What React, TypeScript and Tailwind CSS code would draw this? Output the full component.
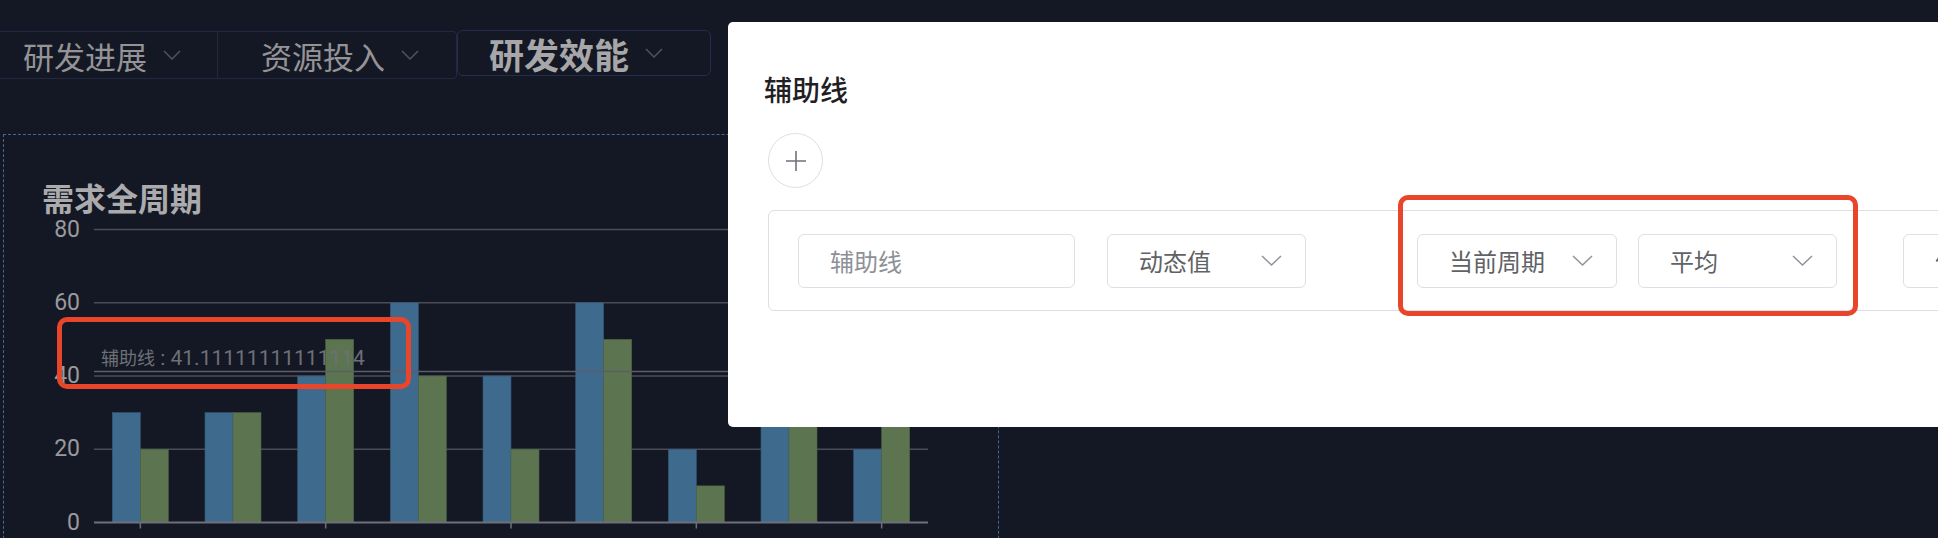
import React from 'react';

const cjk = "font-['Noto_Sans_CJK_SC','Noto_Sans',sans-serif]";

// chart values per category: [blue, green]
const series: [number, number][] = [
    [30, 20],
    [30, 30],
    [40, 50],
    [60, 40],
    [40, 20],
    [60, 50],
    [20, 10],
    [40, 40],
    [20, 40],
];

function Chevron({ className = '', w = 21, h = 11, color = '#909399' }: { className?: string; w?: number; h?: number; color?: string }) {
    return (
        <svg width={w} height={h} viewBox={`0 0 ${w} ${h}`} className={className} fill="none">
            <polyline points={`1,1 ${w / 2},${h - 1} ${w - 1},1`} stroke={color} strokeWidth="1.5" />
        </svg>
    );
}

function Tab({ label, active, className }: { label: string; active?: boolean; className: string }) {
    return (
        <div className={`flex h-[46px] items-center ${className}`}>
            <span className={active ? 'text-[35px] font-bold leading-none text-[#a7a7a9]' : 'text-[31px] leading-none text-[#949497]'}>{label}</span>
            <Chevron w={18} h={10} color="#4d5264" className="ml-[16px]" />
        </div>
    );
}

function BarChart() {
    // svg origin sits at page (4, 213)
    const yOf = (v: number) => 309.5 - v * 3.6625;
    const band = 834 / 9;
    const left = 90;
    return (
        <svg width="994" height="330" className="block">
            {[80, 60, 40, 20].map((v) => (
                <g key={v}>
                    <line x1={left} x2={924} y1={yOf(v)} y2={yOf(v)} stroke="#4a4d56" strokeWidth="1.6" />
                    <text x="76" y={yOf(v) + 7} textAnchor="end" fontSize="23" fill="#9a9a9c" fontFamily="Roboto, sans-serif">
                        {v}
                    </text>
                </g>
            ))}
            <text x="76" y={yOf(0) + 7} textAnchor="end" fontSize="23" fill="#9a9a9c" fontFamily="Roboto, sans-serif">
                0
            </text>
            {series.map(([b, g], i) => {
                const c = left + band / 2 + band * i;
                return (
                    <g key={i}>
                        <rect x={c - 28} y={yOf(b)} width="28" height={b * 3.6625} fill="#3e6a8e" stroke="#35597a" strokeWidth="0.6" />
                        <rect x={c} y={yOf(g)} width="28" height={g * 3.6625} fill="#5c744f" stroke="#4e6444" strokeWidth="0.6" />
                        {i % 2 === 0 && <line x1={c} x2={c} y1={yOf(0)} y2={yOf(0) + 6} stroke="#6e7079" strokeWidth="1.5" />}
                    </g>
                );
            })}
            <line x1={left} x2={924} y1={yOf(0)} y2={yOf(0)} stroke="#6e7079" strokeWidth="2" />
            {/* mark line */}
            <line x1={left} x2={924} y1={yOf(41.111) - 0.5} y2={yOf(41.111) - 0.5} stroke="#5b5e67" strokeWidth="1.5" />
            <text x="97" y="152" fill="#6d7077">
                <tspan fontSize="18" fontFamily="'Noto Sans CJK SC', sans-serif">辅助线</tspan>
                <tspan fontSize="21" fontFamily="Roboto, sans-serif" xmlSpace="preserve">{'\u00a0:\u00a041.11111111111114'}</tspan>
            </text>
        </svg>
    );
}

function Field({ text, width, placeholder, chevron }: { text: string; width: string; placeholder?: boolean; chevron?: boolean }) {
    return (
        <div className={`flex h-[54px] shrink-0 items-center justify-between rounded-[6px] border-[1.5px] border-[#dcdfe6] bg-white pl-[31px] pr-[23px] ${width}`}>
            <span className={`text-[24px] leading-none ${placeholder ? 'text-[#8e9097]' : 'text-[#606266]'}`}>{text}</span>
            {chevron && <Chevron />}
        </div>
    );
}

export default function App() {
    return (
        <div className={`relative h-[538px] w-[1938px] overflow-hidden bg-[#141824] ${cjk}`}>
            {/* tabs */}
            <div className="flex items-start pt-[31px]">
                <div className="ml-[-21px] flex rounded-[4px] border border-[#232842]">
                    <Tab label="研发进展" className="w-[238px] border-r border-[#232842] pl-[43px]" />
                    <Tab label="资源投入" className="w-[238px] pl-[43px]" />
                </div>
                <Tab label="研发效能" active className="-mt-[1px] w-[254px] rounded-[6px] border border-[#262c4b] pl-[31px]" />
            </div>

            {/* chart panel */}
            <div className="ml-[3px] mt-[55px] h-[440px] w-[996px] border border-dashed border-[#48678f]">
                <div className="pl-[38px] pt-[46px] text-[32px] font-bold leading-[32px] text-[#ababad]">需求全周期</div>
                <BarChart />
            </div>

            {/* modal */}
            <div className="absolute left-[728px] top-[22px] h-[405px] w-[1300px] rounded-l-[5px] bg-white pl-[40px] pt-[53px]">
                <div className="-ml-[4px] text-[28px] font-medium leading-[28px] text-[#1f2023]">辅助线</div>
                <button className="mt-[30px] flex h-[55px] w-[55px] items-center justify-center rounded-full border-[1.5px] border-[#dcdfe6] bg-white">
                    <svg width="20" height="20" viewBox="0 0 20 20">
                        <path d="M10 0V20M0 10H20" stroke="#707278" strokeWidth="1.6" />
                    </svg>
                </button>
                <div className="mt-[22px] flex h-[101px] w-[1300px] items-center rounded-[6px] border-[1.5px] border-[#dcdfe6] pl-[29px]">
                    <Field text="辅助线" width="w-[277px]" placeholder />
                    <div className="ml-[32px]">
                        <Field text="动态值" width="w-[199px]" chevron />
                    </div>
                    <div className="ml-[111px]">
                        <Field text="当前周期" width="w-[200px]" chevron />
                    </div>
                    <div className="ml-[21px]">
                        <Field text="平均" width="w-[199px]" chevron />
                    </div>
                    <div className="ml-[66px]">
                        <Field text="值" width="w-[200px]" />
                    </div>
                </div>
            </div>

            {/* annotations */}
            <div className="absolute left-[1398px] top-[195px] h-[121px] w-[460px] rounded-[10px] border-[5px] border-[#e8452a]" />
            <div className="absolute left-[57px] top-[317px] h-[72px] w-[354px] rounded-[10px] border-[5px] border-[#e8452a]" />
        </div>
    );
}
